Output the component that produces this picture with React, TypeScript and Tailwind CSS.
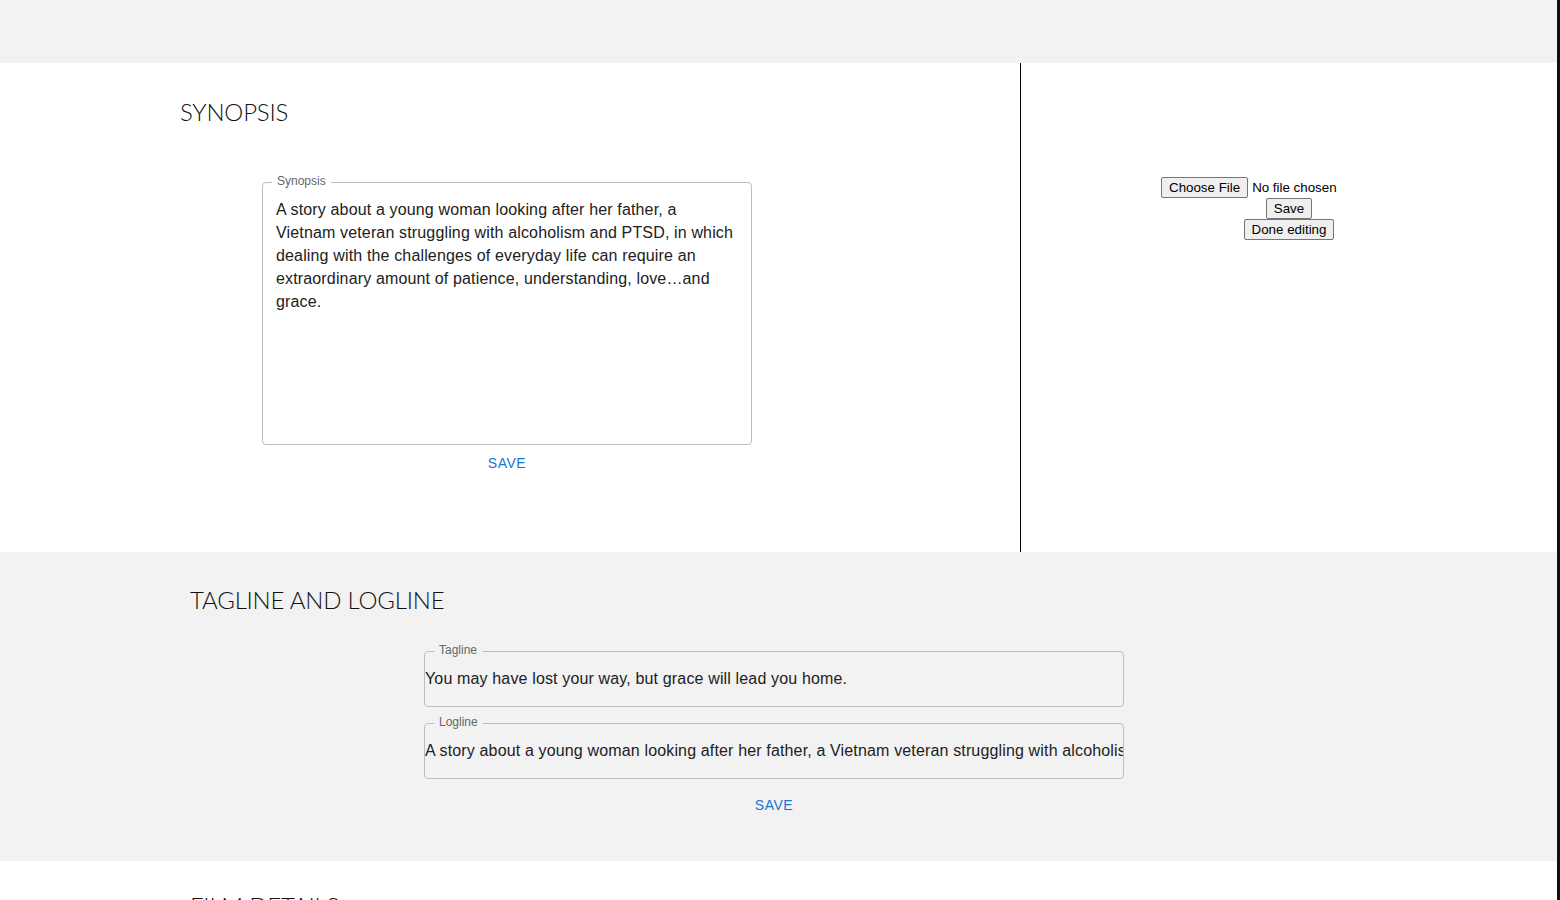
const synopsis =
  'A story about a young woman looking after her father, a Vietnam veteran struggling with alcoholism and PTSD, in which dealing with the challenges of everyday life can require an extraordinary amount of patience, understanding, love\u2026and grace.';

function SectionHeading({ children, className = '' }: { children: string; className?: string }) {
  return (
    <h2
      className={`text-[24px] leading-[32px] font-light tracking-[-0.2px] text-[#111] ${className}`}
      style={{ fontFamily: 'Lato, "Open Sans", sans-serif' }}
    >
      {children}
    </h2>
  );
}

function OutlinedField({
  label,
  bg,
  className = '',
  children,
}: {
  label: string;
  bg: string;
  className?: string;
  children: React.ReactNode;
}) {
  return (
    <div className={`relative rounded-[4px] border border-[#bdbdbd] ${className}`}>
      <span
        className={`absolute left-[9px] top-[-10px] px-[5px] text-[12px] leading-[16px] text-[#666] ${bg}`}
      >
        {label}
      </span>
      {children}
    </div>
  );
}

function SaveButton() {
  return (
    <button className="text-[14px] font-normal uppercase tracking-[0.5px] text-[#1976d2] leading-[24px] px-2">
      Save
    </button>
  );
}

function NativeButton({ children }: { children: string }) {
  return (
    <button
      className="bg-[#efefef] border border-[#767676] rounded-[2px] px-[7px] h-[21px] text-[13.33px] leading-[19px] text-black"
      style={{ fontFamily: '"Liberation Sans", Arial, sans-serif' }}
    >
      {children}
    </button>
  );
}

export default function App() {
  return (
    <div
      className="flex h-[900px] w-full overflow-hidden bg-white text-[#212121]"
      style={{ fontFamily: '"Liberation Sans", Arial, sans-serif' }}
    >
      <div className="flex flex-1 flex-col">
        {/* top bar */}
        <div className="h-[63px] shrink-0 bg-[#f2f2f2]" />

        {/* synopsis */}
        <div className="flex h-[489px] shrink-0 bg-white">
          <div className="flex w-[1021px] flex-col border-r border-black pt-[33px]">
            <SectionHeading className="pl-[180px]">SYNOPSIS</SectionHeading>
            <div className="mt-[54px] ml-[262px] flex w-[490px] flex-col items-center">
              <OutlinedField label="Synopsis" bg="bg-white" className="h-[263px] w-full">
                <p className="pl-[13px] pr-[16px] pt-[15px] text-[16px] leading-[23px] tracking-[0.15px] text-[#212121]">
                  {synopsis}
                </p>
              </OutlinedField>
              <div className="mt-[6px]">
                <SaveButton />
              </div>
            </div>
          </div>
          <div className="flex flex-1 flex-col items-center pt-[114px]">
            <div className="flex w-[256px] items-center gap-[4px] text-[13.33px] text-black">
              <NativeButton>Choose File</NativeButton>
              <span>No file chosen</span>
            </div>
            <NativeButton>Save</NativeButton>
            <NativeButton>Done editing</NativeButton>
          </div>
        </div>

        {/* tagline and logline */}
        <div className="flex h-[309px] shrink-0 flex-col bg-[#f2f2f2] pt-[32px]">
          <SectionHeading className="pl-[190px]">TAGLINE AND LOGLINE</SectionHeading>
          <div className="mt-[35px] ml-[424px] flex w-[700px] flex-col items-center">
            <OutlinedField label="Tagline" bg="bg-[#f2f2f2]" className="h-[56px] w-full">
              <div className="flex h-full items-center overflow-hidden whitespace-nowrap text-[16px] tracking-[0.15px]">
                You may have lost your way, but grace will lead you home.
              </div>
            </OutlinedField>
            <OutlinedField label="Logline" bg="bg-[#f2f2f2]" className="mt-[16px] h-[56px] w-full">
              <div className="flex h-full items-center overflow-hidden whitespace-nowrap text-[16px] tracking-[0.15px]">
                {synopsis}
              </div>
            </OutlinedField>
            <div className="mt-[14px]">
              <SaveButton />
            </div>
          </div>
        </div>

        {/* film details */}
        <div className="flex-1 bg-white pt-[29px]">
          <SectionHeading className="pl-[190px]">FILM DETAILS</SectionHeading>
        </div>
      </div>
      <div className="w-[3px] shrink-0 bg-[#0b1116]" />
    </div>
  );
}
